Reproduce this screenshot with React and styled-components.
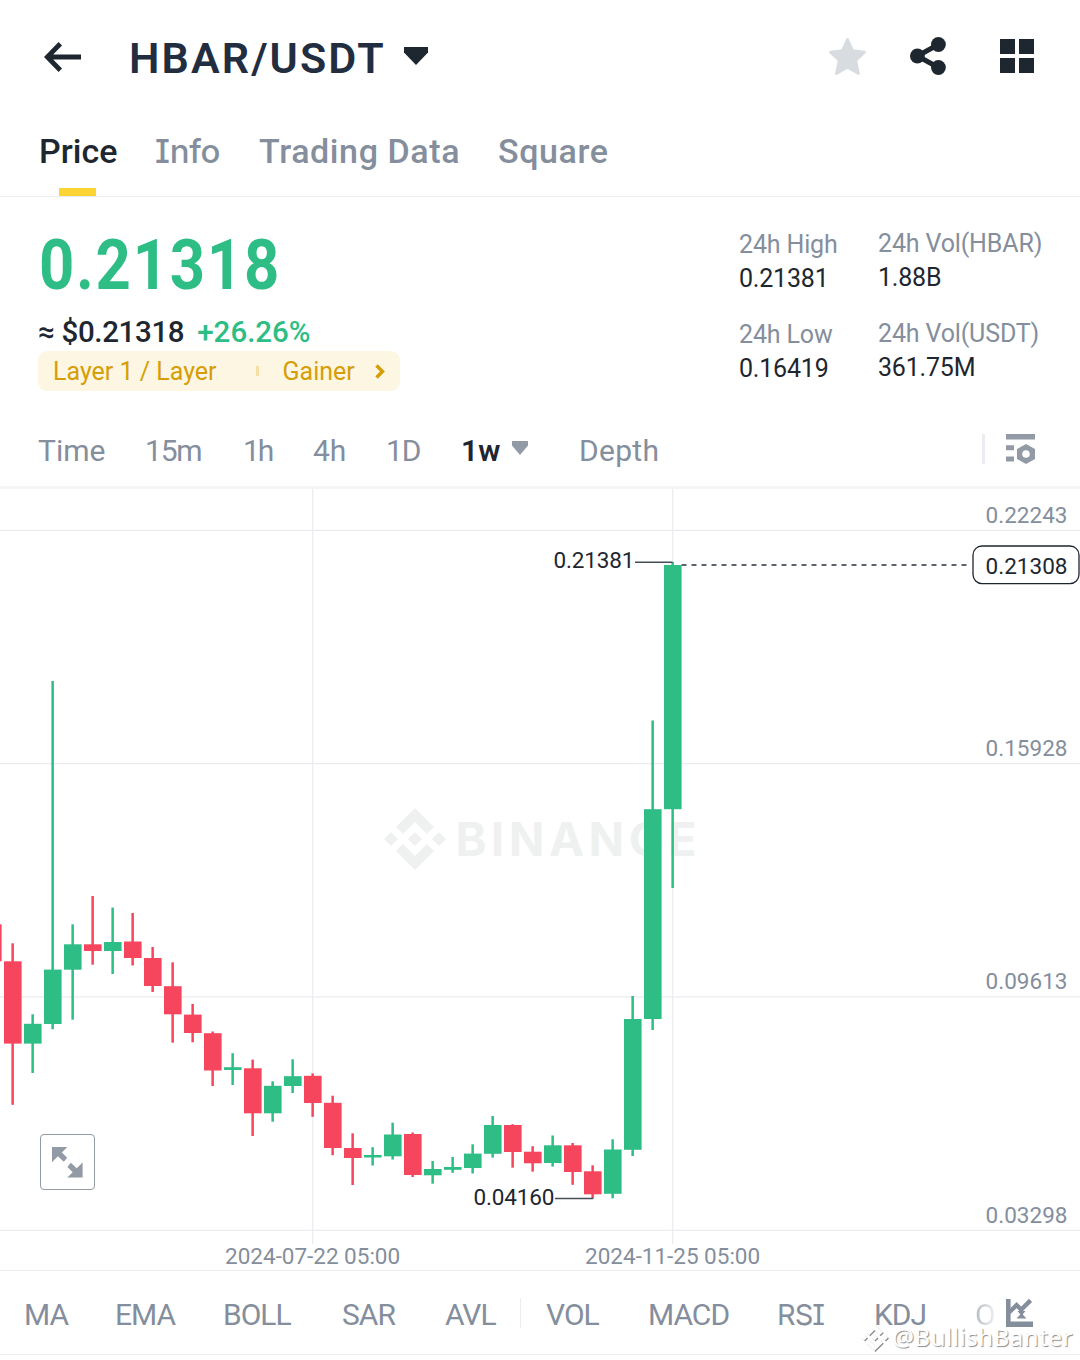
import styled, { createGlobalStyle } from "styled-components";
import { SiBinance } from "react-icons/si";

const candles = [
  ["down", 924.3, 924.3, 961.3, 961.3],
  ["down", 943.3, 961.3, 1043.6, 1104.8],
  ["up", 1014.3, 1023.8, 1043.6, 1073],
  ["up", 681, 969.6, 1024, 1029.2],
  ["up", 924.3, 944.3, 969.7, 1019.7],
  ["down", 896, 944.3, 951, 964.7],
  ["up", 907.6, 942, 951, 974],
  ["down", 913, 941.5, 958, 965.5],
  ["down", 947, 958, 986, 992],
  ["down", 962.3, 986.2, 1014.3, 1042.7],
  ["down", 1004, 1014.6, 1033, 1042.3],
  ["down", 1031.5, 1033.2, 1070.5, 1086],
  ["up", 1053.2, 1067.2, 1070, 1085],
  ["down", 1059.6, 1068.3, 1113.3, 1136],
  ["up", 1081.3, 1085.8, 1113.3, 1121.7],
  ["up", 1059.3, 1076.2, 1086, 1093],
  ["down", 1073.4, 1075.8, 1103, 1116.8],
  ["down", 1095.7, 1102.8, 1148, 1155.2],
  ["down", 1133.3, 1148, 1158, 1185],
  ["up", 1147.2, 1155, 1157.5, 1165.5],
  ["up", 1122.7, 1134.5, 1156.3, 1159.5],
  ["down", 1132.5, 1134, 1175, 1177],
  ["up", 1161, 1169, 1175.3, 1183.7],
  ["up", 1157, 1167, 1169.8, 1172.8],
  ["up", 1144.3, 1153.6, 1168, 1173.5],
  ["up", 1116, 1125, 1153.8, 1157.6],
  ["down", 1124.2, 1125, 1152, 1167.7],
  ["down", 1146.2, 1151.7, 1163.3, 1171.6],
  ["up", 1135.5, 1145.3, 1163, 1166.6],
  ["down", 1143, 1145.3, 1172, 1184.8],
  ["down", 1165.3, 1171.3, 1194.3, 1198.6],
  ["up", 1139.3, 1149.5, 1193.8, 1198.3],
  ["up", 996, 1019, 1149.8, 1156],
  ["up", 720.5, 809.2, 1019, 1030],
  ["up", 562, 565, 809.2, 888],
];

const priceLevels = [
  { y: 530.3, label: "0.22243" },
  { y: 763.6, label: "0.15928" },
  { y: 996.8, label: "0.09613" },
  { y: 1230.3, label: "0.03298" },
];

const dates = [
  { x: 312.6, label: "2024-07-22 05:00" },
  { x: 672.6, label: "2024-11-25 05:00" },
];

export default function App() {
  return (
    <Page>
      <GlobalStyle />
      <Header />
      <Tabs>
        <Tab $active>Price</Tab>
        <Tab $serifI>Info</Tab>
        <Tab>Trading Data</Tab>
        <Tab>Square</Tab>
      </Tabs>
      <Quote />
      <Toolbar />
      <ChartBox>
        <Chart />
        <ExpandButton aria-label="Full screen">
          <svg width="31" height="31" viewBox="0 0 31 31" fill="#929aa5">
            <path d="M0 0h15.3l-5.4 5.4 5.3 5.3-3.4 4.1-5.9-5.5L0 15.2z" />
            <path d="M30.6 30.6H15.3l5.4-5.4-5.3-5.3 3.4-4.1 5.9 5.5 5.9-5.9z" />
          </svg>
        </ExpandButton>
      </ChartBox>
      <Indicators />
    </Page>
  );
}

function Header() {
  return (
    <HeaderBar>
      <svg width="37" height="30" viewBox="0 0 37 30" fill="none">
        <path d="M16.3 1.7L3.3 15l13 13.3M3 15h34" stroke="#1e2630" strokeWidth="4.8" />
      </svg>
      <Pair>HBAR/USDT</Pair>
      <svg width="24" height="18" viewBox="0 0 24 18" fill="#1e2630">
        <path d="M0 0h24v5.4L12 18 0 5.4z" />
      </svg>
      <HeaderIcons>
        <svg width="39" height="40" viewBox="0 0 39 40">
          <path
            d="M19.5 3.3l5.1 11.2 12.1 1.6-8.9 8.4 2.8 13.1-11.1-6.2-11.1 6.2 2.8-13.1-8.9-8.4 12.1-1.6z"
            fill="#d8dce1"
            stroke="#d8dce1"
            strokeWidth="2.6"
            strokeLinejoin="round"
          />
        </svg>
        <svg width="36" height="38" viewBox="0 0 36 38">
          <path d="M28.4 7.5L7.4 19l21 11.5" fill="none" stroke="#1e2630" strokeWidth="5" />
          <g fill="#1e2630">
            <circle cx="28.4" cy="7.5" r="7.4" />
            <circle cx="7.4" cy="19" r="7.4" />
            <circle cx="28.4" cy="30.5" r="7.4" />
          </g>
        </svg>
        <svg width="34" height="34" viewBox="0 0 34 34" fill="#1e2630">
          <path d="M0 0h15v15H0zM19 0h15v15H19zM0 19h15v15H0zM19 19h15v15H19z" />
        </svg>
      </HeaderIcons>
    </HeaderBar>
  );
}

function Quote() {
  return (
    <QuoteSection>
      <div>
        <LastPrice>0.21318</LastPrice>
        <Approx>
          <span>≈ $0.21318</span>
          <Change>+26.26%</Change>
        </Approx>
        <TagLink>
          <TagText>Layer 1 / Layer</TagText>
          <TagDivider />
          <TagText>Gainer</TagText>
          <svg width="10" height="15" viewBox="0 0 10 15" fill="none">
            <path d="M1.5 1.5l6 6-6 6" stroke="#d69e06" strokeWidth="3.4" />
          </svg>
        </TagLink>
      </div>
      <Stats>
        <Stat label="24h High" value="0.21381" />
        <Stat label="24h Low" value="0.16419" />
      </Stats>
      <Stats $raised>
        <Stat label="24h Vol(HBAR)" value="1.88B" />
        <Stat label="24h Vol(USDT)" value="361.75M" />
      </Stats>
    </QuoteSection>
  );
}

function Stat({ label, value }) {
  return (
    <div>
      <StatLabel>{label}</StatLabel>
      <StatValue>{value}</StatValue>
    </div>
  );
}

function Toolbar() {
  return (
    <ToolbarRow>
      <Interval>Time</Interval>
      <Interval $ls="-1.2px">15m</Interval>
      <Interval $ls="-2px">1h</Interval>
      <Interval>4h</Interval>
      <Interval $ls="-1px">1D</Interval>
      <Interval $active>
        1w
        <svg width="16" height="14" viewBox="0 0 16 14" fill="#929aa5">
          <path d="M0 0h16v4.5L8 14 0 4.5z" />
        </svg>
      </Interval>
      <Interval $ls="0.3px">Depth</Interval>
      <ToolbarSettings>
        <svg width="30" height="31" viewBox="0 0 30 31" fill="#929aa5">
          <path d="M0 0h29v5.4H0zM0 11.2h8v5H0zM0 22.4h8v5H0z" />
          <path
            fillRule="evenodd"
            d="M20 10l9 5v10l-9 5-9-5V15zM20 16.2a3.8 3.8 0 1 0 0 7.6 3.8 3.8 0 0 0 0-7.6z"
          />
        </svg>
      </ToolbarSettings>
    </ToolbarRow>
  );
}

function Chart() {
  return (
    <svg
      width="1080"
      height="781"
      viewBox="0 489 1080 781"
      fontFamily="Roboto, sans-serif"
      fontSize="22.5"
    >
      <g stroke="#eaecef" strokeWidth="1.3">
        {priceLevels.map(({ y }) => (
          <path key={y} d={`M0 ${y}H1080`} />
        ))}
        {dates.map(({ x }) => (
          <path key={x} d={`M${x} 489V1244`} />
        ))}
      </g>

      <SiBinance x="384" y="808" size="62" color="#eff1f1" />
      <text
        x="455.5"
        y="856.3"
        fill="#eff1f1"
        fontFamily="Inter, sans-serif"
        fontWeight="700"
        fontSize="47"
        textLength="241"
      >
        BINANCE
      </text>

      {candles.map(([side, high, top, bottom, low], i) => (
        <g key={i} fill={side === "up" ? "#2ebd85" : "#f6465d"}>
          <rect x={i * 20 - 8.6} y={high} width="2.5" height={low - high} />
          <rect x={i * 20 - 16} y={top} width="17.6" height={bottom - top} />
        </g>
      ))}

      <g fill="#848e9c">
        {priceLevels.map(({ y, label }) => (
          <text key={label} x="985.5" y={y - 7.4} textLength="82">
            {label}
          </text>
        ))}
        {dates.map(({ x, label }) => (
          <text key={label} x={x} y="1264.3" textAnchor="middle" textLength="175">
            {label}
          </text>
        ))}
      </g>

      <g fill="#1e2630">
        <text x="553.5" y="568.4" textLength="81">
          0.21381
        </text>
        <text x="473.5" y="1205.2" textLength="81">
          0.04160
        </text>
      </g>
      <path d="M635 562.2H672.6M555 1198.4H593" stroke="#474d57" strokeWidth="1.5" />
      <path d="M681.5 565H968" stroke="#5e646d" strokeWidth="2" strokeDasharray="5 5" />
      <rect
        x="973"
        y="546"
        width="106"
        height="37.6"
        rx="9"
        fill="#fff"
        stroke="#1e2630"
        strokeWidth="1.3"
      />
      <text x="985.5" y="574" fill="#1e2630" textLength="82">
        0.21308
      </text>
    </svg>
  );
}

function Indicators() {
  return (
    <IndicatorRow>
      <Indicator>MA</Indicator>
      <Indicator>EMA</Indicator>
      <Indicator>BOLL</Indicator>
      <Indicator>SAR</Indicator>
      <Indicator>AVL</Indicator>
      <IndicatorDivider />
      <Indicator>VOL</Indicator>
      <Indicator>MACD</Indicator>
      <Indicator $serifI>RSI</Indicator>
      <Indicator>KDJ</Indicator>
      <Indicator $faded>O</Indicator>
      <svg width="28" height="29" viewBox="0 0 28 29">
        <path d="M0 1h4.6v22.6H27V29H0z" fill="#848e9c" />
        <path d="M3 14.5l7.6-7.4 4.6 4.6L24.5 2.4" fill="none" stroke="#848e9c" strokeWidth="4.4" />
        <path d="M11.5 13h8l-2.8 3.6 3.8 4h-10l3.8-4z" fill="#848e9c" />
      </svg>
      <Credit>
        <SiBinance size={27} />
        @BullishBanter
      </Credit>
    </IndicatorRow>
  );
}

const GlobalStyle = createGlobalStyle`
  * {
    box-sizing: border-box;
  }
  body {
    margin: 0;
    background-color: #fff;
    font-family: Roboto, "Liberation Sans", sans-serif;
  }
  svg {
    display: block;
    flex-shrink: 0;
  }
`;

const Page = styled.div`
  width: 1080px;
  height: 1360px;
  overflow: hidden;
  background-color: #fff;
  color: #1e2630;
`;

const HeaderBar = styled.header`
  height: 113px;
  padding: 0 46px 0 44px;
  display: flex;
  align-items: center;
`;

const Pair = styled.h1`
  width: 274px;
  margin: 3px 0 0 47px;
  padding-left: 1px;
  color: #222d3f;
  font-size: 43px;
  font-weight: 600;
  line-height: 50px;
  letter-spacing: 2.1px;
  & + svg {
    margin: -1px 0 0 2px;
  }
`;

const HeaderIcons = styled.div`
  margin: -1px 0 0 auto;
  display: grid;
  grid-template-columns: 82px 90px 34px;
  align-items: center;
`;

const Tabs = styled.nav`
  height: 84px;
  padding-left: 39px;
  border-bottom: 1px solid #eaecef;
  display: grid;
  grid-template-columns: 116px 104px 239px auto;
  justify-content: start;
`;

const Tab = styled.a`
  position: relative;
  justify-self: start;
  color: ${({ $active }) => ($active ? "#1e2630" : "#848e9c")};
  font-family: ${({ $serifI }) => ($serifI ? "Inter" : "Roboto")}, sans-serif;
  font-feature-settings: "cv08" ${({ $serifI }) => ($serifI ? 1 : 0)};
  font-size: ${({ $serifI }) => ($serifI ? "33px" : "34px")};
  font-weight: 500;
  line-height: 77px;
  letter-spacing: ${({ $active, $serifI }) => ($serifI ? "-0.3px" : $active ? "0" : "0.6px")};
  &::after {
    content: "";
    display: ${({ $active }) => ($active ? "block" : "none")};
    position: absolute;
    left: 20px;
    bottom: 0;
    width: 37px;
    height: 8px;
    background-color: #fcd535;
  }
`;

const QuoteSection = styled.section`
  height: 219px;
  padding: 33px 0 0 38px;
  display: grid;
  grid-template-columns: 701px 139px auto;
`;

const LastPrice = styled.div`
  height: 71px;
  padding-left: 1px;
  color: #2ebd85;
  font-size: 70px;
  font-weight: 700;
  line-height: 71px;
  letter-spacing: 2px;
  transform: scaleX(0.88);
  transform-origin: left;
`;

const Approx = styled.div`
  margin-top: 13px;
  display: flex;
  gap: 13px;
  font-size: 29.5px;
  font-weight: 500;
  line-height: 36px;
  letter-spacing: -0.35px;
`;

const Change = styled.span`
  color: #2ebd85;
  letter-spacing: 0;
`;

const TagLink = styled.div`
  width: 362px;
  height: 40px;
  margin-top: 1px;
  padding: 0 15px;
  border-radius: 9px;
  background-color: #fdf6e3;
  display: flex;
  align-items: center;
`;

const TagText = styled.span`
  padding-top: 2px;
  color: #d69e06;
  font-size: 25px;
  line-height: 38px;
  & + svg {
    margin-left: auto;
  }
`;

const TagDivider = styled.span`
  width: 3px;
  height: 10px;
  margin: 0 24px 0 39px;
  background-color: #f5e0a6;
`;

const Stats = styled.div`
  margin-top: ${({ $raised }) => ($raised ? "-4px" : "-3px")};
  display: flex;
  flex-direction: column;
  gap: 21px;
`;

const StatLabel = styled.div`
  color: #848e9c;
  font-size: 25px;
  line-height: 35px;
  letter-spacing: -0.15px;
`;

const StatValue = styled.div`
  font-size: 25px;
  line-height: 34px;
  letter-spacing: -0.2px;
`;

const ToolbarRow = styled.div`
  height: 73px;
  padding: 0 0 2px 38px;
  border-bottom: 3px solid #f4f5f7;
  display: grid;
  grid-template-columns: 107px 98px 70px 73px 75px 118px 403px auto;
  align-items: center;
`;

const Interval = styled.span`
  display: flex;
  align-items: center;
  gap: 12px;
  color: ${({ $active }) => ($active ? "#1e2630" : "#848e9c")};
  font-size: 30px;
  font-weight: ${({ $active }) => ($active ? 600 : 400)};
  letter-spacing: ${({ $ls }) => $ls || 0};
  svg {
    margin-bottom: 5px;
  }
`;

const ToolbarSettings = styled.div`
  height: 30px;
  margin-bottom: 2px;
  padding-left: 21px;
  border-left: 3px solid #eaecef;
`;

const ChartBox = styled.div`
  position: relative;
  height: 781px;
`;

const ExpandButton = styled.button`
  position: absolute;
  left: 40px;
  top: 645px;
  width: 55px;
  height: 56px;
  padding: 0;
  border: 1.5px solid #929aa5;
  border-radius: 4px;
  background-color: #fff;
  display: grid;
  place-items: center;
`;

const IndicatorRow = styled.div`
  position: relative;
  height: 85px;
  padding-left: 24px;
  border-top: 1px solid #eaecef;
  border-bottom: 1px solid #eaecef;
  display: grid;
  grid-template-columns: 91px 108px 119px 103px 75px 26px 102px 129px 97px 101px 31px auto;
  align-items: center;
`;

const Indicator = styled.span`
  padding-top: 3px;
  color: ${({ $faded }) => ($faded ? "transparent" : "#848e9c")};
  background: ${({ $faded }) => ($faded ? "linear-gradient(90deg, #b5bbc4, #eff0f2 20px) text" : "none")};
  font-family: ${({ $serifI }) => ($serifI ? "Inter" : "Roboto")}, sans-serif;
  font-feature-settings: "cv08" ${({ $serifI }) => ($serifI ? 1 : 0)};
  font-size: ${({ $serifI }) => ($serifI ? "29px" : "30px")};
  letter-spacing: -1px;
`;

const IndicatorDivider = styled.span`
  width: 1px;
  height: 30px;
  background-color: #eaecef;
`;

const Credit = styled.div`
  position: absolute;
  right: 7px;
  bottom: 0;
  display: flex;
  align-items: center;
  gap: 4px;
  color: #fff;
  font-family: "Noto Sans", sans-serif;
  font-size: 24px;
  line-height: 34px;
  letter-spacing: 0.55px;
  text-shadow: 1px 1px 1px #8c8c8c;
  svg {
    filter: drop-shadow(1px 1px 0.5px #8c8c8c);
  }
`;
